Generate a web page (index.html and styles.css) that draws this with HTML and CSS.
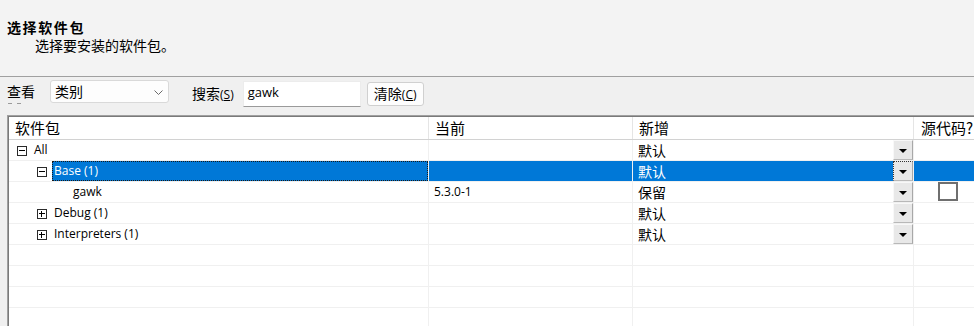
FILE: index.html
```html
<!DOCTYPE html>
<html lang="zh-CN">
<head>
<meta charset="utf-8">
<title>选择软件包</title>
<link rel="stylesheet" href="styles.css">
</head>
<body>
<div class="page">
  <header class="banner">
    <div class="title">选择软件包</div>
    <div class="subtitle">选择要安装的软件包。</div>
  </header>
  <div class="toolbar">
    <div class="view-label">
      <div class="view-text">查看</div>
      <div class="cut"><span></span><span></span></div>
    </div>
    <div class="combo">
      <span class="combo-text">类别</span>
      <svg class="chev" width="9" height="5" viewBox="0 0 9 5"><polyline points="0.5,0.5 4.5,4.5 8.5,0.5" fill="none" stroke="#6a6a6a" stroke-width="1"/></svg>
    </div>
    <div class="search-label">搜索<span class="acc">(<u>S</u>)</span></div>
    <div class="search-input">gawk</div>
    <button class="btn">清除<span class="acc">(<u>C</u>)</span></button>
  </div>
  <div class="grid">
    <div class="grid-inner">
      <div class="row head">
        <div class="cell">软件包</div>
        <div class="cell">当前</div>
        <div class="cell">新增</div>
        <div class="cell c4">源代码?</div>
      </div>

      <div class="row">
        <div class="cell tree lvl0"><span class="box minus"></span><span class="label">All</span></div>
        <div class="cell"></div>
        <div class="cell sel"><span class="sel-text">默认</span><span class="dd"><i></i></span></div>
        <div class="cell"></div>
      </div>

      <div class="row selected">
        <div class="cell tree lvl1"><span class="box minus"></span><span class="label focus">Base (1)</span></div>
        <div class="cell blue"></div>
        <div class="cell sel"><span class="sel-text blue">默认</span><span class="dd focus-dd"><i></i></span></div>
        <div class="cell blue"></div>
      </div>

      <div class="row">
        <div class="cell tree lvl2"><span class="label">gawk</span></div>
        <div class="cell ver">5.3.0-1</div>
        <div class="cell sel"><span class="sel-text">保留</span><span class="dd"><i></i></span></div>
        <div class="cell"><span class="check"></span></div>
      </div>

      <div class="row">
        <div class="cell tree lvl1"><span class="box plus"></span><span class="label">Debug (1)</span></div>
        <div class="cell"></div>
        <div class="cell sel"><span class="sel-text">默认</span><span class="dd"><i></i></span></div>
        <div class="cell"></div>
      </div>

      <div class="row">
        <div class="cell tree lvl1"><span class="box plus"></span><span class="label">Interpreters (1)</span></div>
        <div class="cell"></div>
        <div class="cell sel"><span class="sel-text">默认</span><span class="dd"><i></i></span></div>
        <div class="cell"></div>
      </div>

      <div class="row"><div class="cell"></div><div class="cell"></div><div class="cell"></div><div class="cell"></div></div>
      <div class="row"><div class="cell"></div><div class="cell"></div><div class="cell"></div><div class="cell"></div></div>
      <div class="row"><div class="cell"></div><div class="cell"></div><div class="cell"></div><div class="cell"></div></div>
      <div class="row"><div class="cell"></div><div class="cell"></div><div class="cell"></div><div class="cell"></div></div>
    </div>
  </div>
</div>
</body>
</html>
```

FILE: styles.css
```css
* { box-sizing: border-box; }
html, body { margin: 0; padding: 0; }
body {
  width: 974px;
  height: 326px;
  overflow: hidden;
  background: #f0f0f0;
  color: #000;
  font-family: "Noto Sans CJK SC", "Liberation Sans", sans-serif;
}
.page { width: 974px; height: 326px; overflow: hidden; }

/* banner */
.banner {
  height: 77px;
  background: #f3f3f3;
  border-bottom: 1px solid #a0a0a0;
  padding: 17px 0 0 7px;
}
.title {
  font-size: 14px;
  font-weight: bold;
  line-height: 20px;
  letter-spacing: 1.6px;
}
.subtitle {
  font-size: 14px;
  line-height: 16px;
  padding-left: 28px;
}

/* toolbar */
.toolbar {
  height: 38px;
  display: flex;
  align-items: flex-start;
  padding-left: 7px;
}
.view-label { width: 28px; margin-top: 4px; }
.view-text { font-size: 14px; line-height: 20px; white-space: nowrap; }
.cut {
  display: flex;
  gap: 5px;
  margin: 2px 0 0 1px;
}
.cut span {
  display: block;
  width: 4px;
  height: 1px;
  background: #9a9a9a;
}
.combo {
  margin: 3px 0 0 15px;
  width: 119px;
  height: 23px;
  background: #fdfdfd;
  border: 1px solid #d9d9d9;
  border-radius: 3px;
  display: flex;
  align-items: center;
  justify-content: space-between;
  padding: 0 5px 0 4px;
}
.combo-text { font-size: 14px; line-height: 20px; margin-top: -2px; }
.chev { display: block; margin-top: 1px; }
.search-label {
  margin: 6px 0 0 23px;
  font-size: 14px;
  line-height: 20px;
  white-space: nowrap;
}
.acc {
  font-family: "Open Sans", "Liberation Sans", sans-serif;
  font-size: 12px;
}
.search-input {
  margin: 4px 0 0 9px;
  width: 118px;
  height: 26px;
  background: #fff;
  border: 1px solid #ececec;
  border-bottom: 1px solid #9a9a9a;
  font-family: "Open Sans", "Liberation Sans", sans-serif;
  font-size: 13px;
  line-height: 16px;
  padding: 2px 0 0 4px;
}
.btn {
  margin: 5px 0 0 6px;
  width: 57px;
  height: 24px;
  background: #fdfdfd;
  border: 1px solid #d0d0d0;
  border-radius: 3px;
  font-family: "Noto Sans CJK SC", sans-serif;
  font-size: 14px;
  line-height: 20px;
  padding: 0;
  color: #000;
  white-space: nowrap;
}

/* grid */
.grid {
  margin-left: 7px;
  width: 1000px;
  height: 211px;
  border-top: 1px solid #a0a0a0;
  border-left: 1px solid #a0a0a0;
  background: #fff;
}
.grid-inner {
  height: 100%;
  border-top: 1px solid #7a7a7a;
  border-left: 1px solid #7a7a7a;
}
.row {
  display: grid;
  grid-template-columns: 420px 204px 281px 95px;
  height: 21px;
  border-bottom: 1px solid #f0f0f0;
}
.cell {
  border-right: 1px solid #f0f0f0;
  font-size: 14px;
  line-height: 20px;
  overflow: hidden;
  white-space: nowrap;
  display: flex;
  align-items: stretch;
}
.row.head { height: 23px; border-bottom: 1px solid #d2d2d2; }
.row.head .cell {
  border-right: 1px solid #e5e5e5;
  font-size: 15px;
  line-height: 22px;
  padding-left: 6px;
}
.row.head .cell.c4 { padding-left: 7px; }

/* tree */
.tree { font-family: "Open Sans", "Liberation Sans", sans-serif; font-size: 12px; }
.lvl0 { padding-left: 8px; }
.lvl1 { padding-left: 28px; }
.lvl2 { padding-left: 57px; }
.box {
  position: relative;
  width: 10px;
  height: 10px;
  margin-top: 6px;
  border: 1px solid #2a2a2a;
  background: #fff;
  flex: none;
}
.box::before {
  content: "";
  position: absolute;
  left: 1px;
  top: 3px;
  width: 6px;
  height: 1px;
  background: #000;
}
.box.plus::after {
  content: "";
  position: absolute;
  left: 3px;
  top: 1px;
  width: 1px;
  height: 6px;
  background: #000;
}
.label {
  margin-left: 5px;
  padding-left: 2px;
  flex: 1;
}
.selected .label {
  background: #0078d7;
  color: #fff;
}
.label.focus { outline: 1px dotted #1a1a1a; outline-offset: -1px; }
.blue { background: #0078d7; color: #fff; }

.ver {
  font-family: "Open Sans", "Liberation Sans", sans-serif;
  font-size: 12px;
  padding-left: 5px;
}
.sel { padding-left: 0; }
.sel-text { flex: 1; padding-left: 5px; }
.dd {
  flex: none;
  width: 20px;
  height: 20px;
  background: #e8e8e8;
  border-left: 1px solid #f8f8f8;
  border-top: 1px solid #f8f8f8;
  border-right: 1px solid #a8a8a8;
  border-bottom: 1px solid #b8b8b8;
  display: flex;
  align-items: center;
  justify-content: center;
}
.dd i {
  display: block;
  width: 0;
  height: 0;
  margin-top: 2px;
  border-left: 4px solid transparent;
  border-right: 4px solid transparent;
  border-top: 4px solid #000;
}
.dd.focus-dd { border-left: 1px dotted #333; border-top: 1px dotted #333; }
.check {
  display: block;
  width: 20px;
  height: 19px;
  margin-left: 24px;
  border: 2px solid #6f6f6f;
  background: #fff;
}
```
